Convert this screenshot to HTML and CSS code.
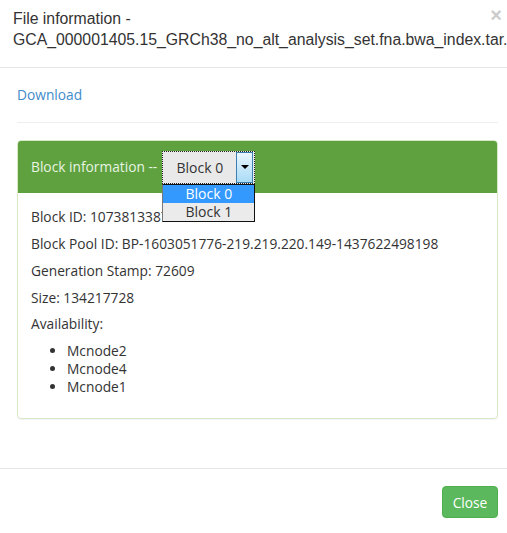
FILE: index.html
```html
<!DOCTYPE html>
<html>
<head>
<meta charset="utf-8">
<link rel="stylesheet" href="styles.css">
</head>
<body>
<div class="modal">
  <div class="modal-header">
    <button class="close" type="button">×</button>
    <h4 class="modal-title">File information - GCA_000001405.15_GRCh38_no_alt_analysis_set.fna.bwa_index.tar.gz</h4>
  </div>
  <div class="modal-body">
    <a class="download" href="#">Download</a>
    <hr class="divider">
    <div class="panel">
      <div class="panel-heading">
        <span class="heading-label">Block information --</span>
        <div class="fake-select">
          <div class="select-face">
            <span class="select-value">Block 0</span>
            <span class="select-button"><span class="arrow"></span></span>
          </div>
          <ul class="select-list">
            <li class="option selected">Block 0</li>
            <li class="option">Block 1</li>
          </ul>
        </div>
      </div>
      <div class="panel-body">
        <p>Block ID: 1073813387</p>
        <p>Block Pool ID: BP-1603051776-219.219.220.149-1437622498198</p>
        <p>Generation Stamp: 72609</p>
        <p>Size: 134217728</p>
        <p>Availability:</p>
        <ul class="nodes">
          <li>Mcnode2</li>
          <li>Mcnode4</li>
          <li>Mcnode1</li>
        </ul>
      </div>
    </div>
  </div>
  <div class="modal-footer">
    <button class="btn-close" type="button">Close</button>
  </div>
</div>
</body>
</html>
```

FILE: styles.css
```css
html, body {
  margin: 0;
  padding: 0;
  overflow: hidden;
  background: #fff;
}

body {
  width: 507px;
  height: 533px;
  font-family: "Open Sans", "Noto Sans", sans-serif;
  font-size: 13.75px;
  color: #333;
}

.modal {
  width: 507px;
}

.modal-header {
  position: relative;
  padding: 8px 0 17px 13px;
  border-bottom: 1px solid #e5e5e5;
}

.modal-title {
  margin: 0;
  font-family: "Liberation Sans", Arial, sans-serif;
  font-weight: normal;
  font-size: 15.8px;
  line-height: 21px;
  color: #333;
  white-space: normal;
}

.close {
  position: absolute;
  top: 5px;
  right: 5px;
  padding: 0;
  border: 0;
  background: transparent;
  font-family: "Liberation Sans", Arial, sans-serif;
  font-size: 20px;
  font-weight: bold;
  line-height: 21px;
  color: #000;
  opacity: 0.2;
}

.modal-body {
  padding: 17px 9px 49px 17px;
}

.download {
  display: block;
  line-height: 20px;
  color: #428bca;
  text-decoration: none;
}

.divider {
  margin: 17px 0 17px 0;
  border: 0;
  border-top: 1px solid #eee;
  height: 0;
}

.panel {
  border: 1px solid #d6e9c6;
  border-radius: 4px;
  box-shadow: 0 1px 1px rgba(0, 0, 0, 0.05);
}

.panel-heading {
  display: flex;
  align-items: center;
  height: 32px;
  padding: 10px 13px;
  background: #5ea13e;
  border-radius: 3px 3px 0 0;
  color: #e8f4e2;
}

.heading-label {
  margin-right: 5px;
  line-height: 20px;
}

.fake-select {
  position: relative;
  width: 93px;
  height: 33px;
}

.select-face {
  display: flex;
  box-sizing: border-box;
  width: 93px;
  height: 33px;
  border: 1px dotted #222;
  background: #e9e9e9;
  padding: 0 1px 0 0;
}

.select-value {
  flex: 1;
  display: flex;
  align-items: center;
  justify-content: center;
  color: #333;
  font-size: 14px;
}

.select-button {
  display: flex;
  align-items: center;
  justify-content: center;
  box-sizing: border-box;
  width: 17px;
  border: 1px solid #3c7fb1;
  background: linear-gradient(#eaf6fd, #a9dbf6);
}

.arrow {
  width: 0;
  height: 0;
  border-left: 4px solid transparent;
  border-right: 4px solid transparent;
  border-top: 4px solid #000;
}

.select-list {
  position: absolute;
  top: 33px;
  left: 0;
  box-sizing: border-box;
  width: 93px;
  margin: 0;
  padding: 0;
  list-style: none;
  border: 1px solid #111;
  border-left-color: #777;
  background: #ebebeb;
  z-index: 2;
}

.option {
  height: 18px;
  line-height: 18px;
  text-align: center;
  color: #333;
  font-size: 14px;
}

.option.selected {
  background: #3399ff;
  color: #fff;
}

.panel-body {
  padding: 15px 13px 22px 13px;
}

.panel-body p {
  margin: 0 0 9px 0;
  line-height: 18px;
}

.panel-body p:nth-of-type(4) {
  margin-bottom: 8px;
}

.nodes {
  margin: 0;
  padding-left: 36px;
  line-height: 18px;
}

.modal-footer {
  display: flex;
  justify-content: flex-end;
  padding: 17px 9px 0 0;
  border-top: 1px solid #e5e5e5;
}

.btn-close {
  box-sizing: border-box;
  width: 56px;
  height: 32px;
  padding: 0;
  border: 1px solid #4cae4c;
  border-radius: 4px;
  background: #5cb85c;
  color: #fff;
  font-family: "Open Sans", "Noto Sans", sans-serif;
  font-size: 13.75px;
}
```
